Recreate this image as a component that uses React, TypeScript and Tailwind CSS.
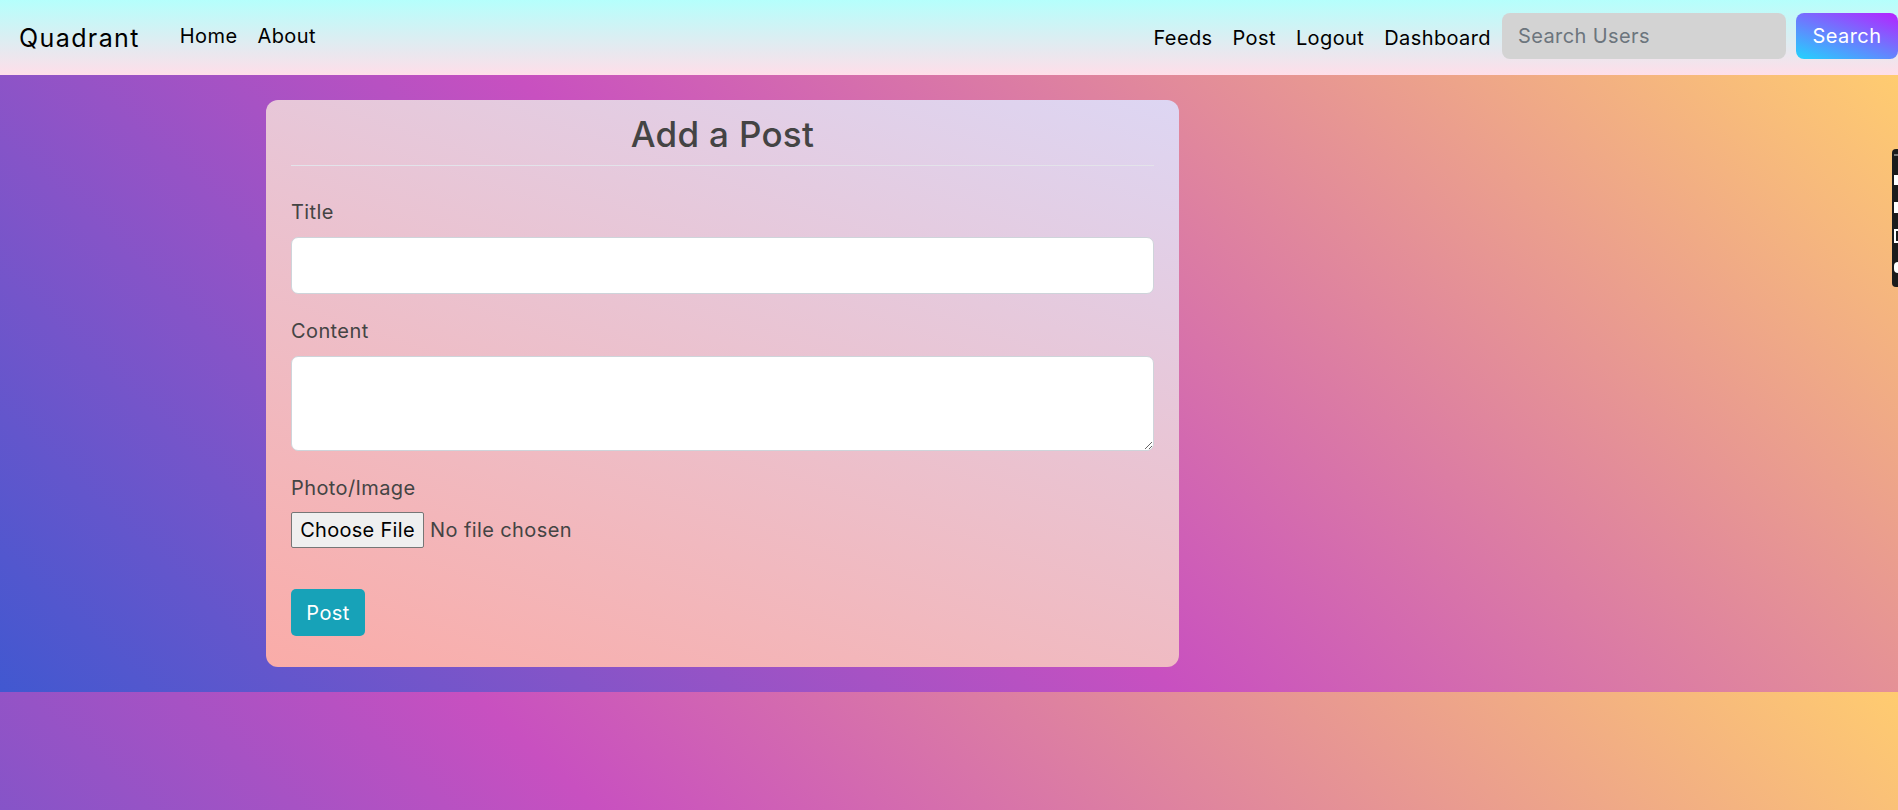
import React from "react";

const NavLink = ({ label }: { label: string }) => (
  <a href="#" className="px-[10px] text-[20px] leading-[30px] tracking-[0.4px] text-black">
    {label}
  </a>
);

const AddPost: React.FC = () => {
  return (
    <div className="relative min-h-screen flex flex-col font-['Inter','Noto_Sans',sans-serif] bg-[linear-gradient(43deg,#4158D0_0%,#C850C0_46%,#FFCC70_100%)] bg-[length:100%_692px] bg-repeat-y">
      {/* Navbar */}
      <nav className="h-[75px] shrink-0 flex items-start overflow-hidden bg-[linear-gradient(0deg,#FFDEE9_0%,#B5FFFC_100%)]">
        <a href="#" className="ml-[19px] mt-[20px] text-[25px] leading-[37px] tracking-[1.4px] text-black">
          Quadrant
        </a>
        <div className="ml-[30px] mt-[21px] flex">
          <NavLink label="Home" />
          <NavLink label="About" />
        </div>
        <div className="ml-auto flex items-start">
          <div className="mt-[23px] flex">
            <NavLink label="Feeds" />
            <NavLink label="Post" />
            <NavLink label="Logout" />
            <NavLink label="Dashboard" />
          </div>
          <input
            type="text"
            placeholder="Search Users"
            className="ml-[1px] mt-[13px] h-[46px] w-[284px] rounded-[8px] bg-[#d3d3d3] px-[16px] text-[20px] tracking-[0.4px] text-[#212529] placeholder:text-[#6c757d] outline-none"
          />
          <button className="ml-[10px] mt-[13px] h-[46px] w-[102px] shrink-0 rounded-[8px] bg-[linear-gradient(19deg,#21D4FD_0%,#B721FF_100%)] text-[20px] tracking-[0.4px] text-white">
            Search
          </button>
        </div>
      </nav>

      {/* Main section */}
      <main className="h-[617px] shrink-0 pt-[25px] pl-[266px] bg-[linear-gradient(43deg,#4158D0_0%,#C850C0_46%,#FFCC70_100%)]">
        <div className="w-[913px] h-[567px] rounded-[12px] px-[25px] pt-[13px] bg-[linear-gradient(19deg,#FAACA8_0%,#DDD6F3_100%)]">
          <h2 className="text-center text-[35px] leading-[42px] font-medium tracking-[0.3px] text-[#444]">Add a Post</h2>
          <hr className="mt-[10px] border-0 border-t border-[#e3e3ea]" />

          <form>
            <label className="mt-[31px] block text-[20px] leading-[30px] tracking-[0.4px] text-[#444]">Title</label>
            <input
              type="text"
              className="mt-[10px] block h-[57px] w-full rounded-[7px] border border-[#ced4da] bg-white px-[15px] text-[20px] outline-none"
            />

            <label className="mt-[22px] block text-[20px] leading-[30px] tracking-[0.4px] text-[#444]">Content</label>
            <textarea className="mt-[10px] block h-[95px] w-full rounded-[7px] border border-[#ced4da] bg-white px-[15px] py-[8px] text-[20px] outline-none" />

            <label className="mt-[22px] block text-[20px] leading-[30px] tracking-[0.4px] text-[#444]">Photo/Image</label>
            <div className="mt-[9px] flex items-center">
              <span className="flex h-[36px] w-[133px] items-center justify-center rounded-[2px] border border-[#767676] bg-[#efefef] text-[20px] tracking-[0.3px] text-black">
                Choose File
              </span>
              <span className="ml-[6px] text-[20px] tracking-[0.4px] text-[#444]">No file chosen</span>
            </div>

            <button
              type="button"
              className="mt-[41px] h-[47px] w-[74px] rounded-[5px] bg-[#17a2b8] text-[20px] tracking-[0.4px] text-white"
            >
              Post
            </button>
          </form>
        </div>
      </main>

      <div className="flex-1" />

      {/* overlay widget at right edge */}
      <div className="absolute left-[1892px] top-[149px] h-[138px] w-[10px] rounded-l-[4px] bg-[#1b1b1b]">
        <div className="ml-[2px] mt-[5px] h-[2px] w-[4px] bg-[#777]" />
        <div className="ml-[2px] mt-[19px] h-[10px] w-[6px] bg-white" />
        <div className="ml-[2px] mt-[17px] h-[11px] w-[6px] bg-white" />
        <div className="ml-[2px] mt-[16px] h-[14px] w-[6px] border-2 border-white" />
        <div className="ml-[2px] mt-[19px] h-[11px] w-[8px] rounded-full bg-white" />
      </div>
    </div>
  );
};

export default AddPost;
